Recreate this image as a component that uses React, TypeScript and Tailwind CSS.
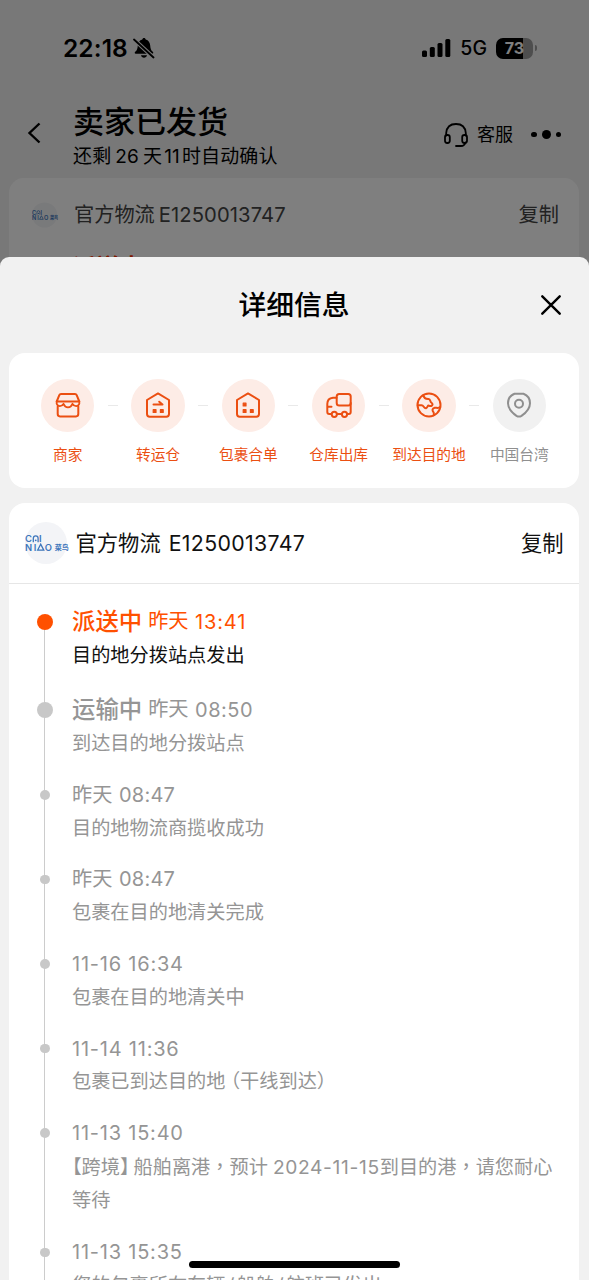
import type { ReactNode } from "react";

const FONT = "font-[Inter,'Noto_Sans_CJK_SC',sans-serif]";

function CainiaoLogo() {
  return (
    <span className="relative block h-[42px] w-[44px] shrink-0 text-[#3e76bb]">
      <span className="absolute top-0 left-0 size-[42px] rounded-full bg-[#f3f4f7]" />
      <svg viewBox="0 0 44 42" className="absolute inset-0 h-full w-full" fill="currentColor">
        <g fontSize="9.4" fontWeight="600">
          <text x="0" y="20.300">C</text>
          <text x="14" y="20.300">I</text>
          <text x="0" y="28.800">N</text>
          <text x="8.800" y="28.800">I</text>
          <text x="19.800" y="28.800">O</text>
        </g>
        <text x="29.800" y="28.200" fontSize="7" fontWeight="700">菜鸟</text>
        <g fill="none" stroke="currentColor" strokeWidth="1.300">
          <path d="M8.300 20.300v-3.800q0-2.700 2.400-2.700t2.400 2.700v3.800" />
          <path d="m12.600 28.200 3.100-6 3.100 6Z" />
        </g>
        <circle cx="10.700" cy="18.300" r="0.900" />
      </svg>
    </span>
  );
}

function StepIcon({ name }: { name: string }) {
  const house = "M14 2.400 25 9v14q0 2.700-2.700 2.700H5.700Q3 25.700 3 23V9Z";
  return (
    <svg viewBox="0 0 28 28" className="size-7" fill="none" stroke="currentColor" strokeWidth="2" strokeLinejoin="round" strokeLinecap="round">
      {name === "shop" && (
        <>
          <path d="M7 2.900h14q1.200 0 1.700 1.200L25.300 10.500H2.700L5.300 4.100Q5.800 2.900 7 2.900Z" />
          <path d="M2.700 10.500v2.300c.6 1.700 1.800 2.300 3.200 2.300 1.600 0 2.800-.8 3.600-2.300 1 2.500 2.500 3.500 4.500 3.500s3.500-1 4.500-3.500c.8 1.500 2 2.300 3.600 2.300 1.400 0 2.600-.6 3.200-2.300v-2.300" strokeWidth="1.800" />
          <path d="M3.700 15.500v7.600q0 2.300 2.300 2.300h16q2.300 0 2.300-2.300v-7.600" />
        </>
      )}
      {name === "transfer" && (
        <>
          <path d={house} />
          <path d="M9.500 13.500h9l-3.300-2.800" />
          <path d="M9.200 18.700h2.800v2.800H9.200zM16.400 18.700h2.800v2.800h-2.800z" fill="currentColor" strokeWidth="1.200" />
        </>
      )}
      {name === "merge" && (
        <>
          <path d={house} />
          <path d="M9.200 12.200h2.800V15H9.200zM9.200 18.700h2.800v2.800H9.200zM16.400 18.700h2.800v2.800h-2.800z" fill="currentColor" strokeWidth="1.200" />
        </>
      )}
      {name === "truck" && (
        <>
          <rect x="11.700" y="2.900" width="14" height="11.500" rx="2.500" />
          <path d="M11.500 6.700H8Q2.300 7.200 2.300 13v8q0 2 2 2h2M12.500 23h4M22.500 23h1.200q2 0 2-2v-9M2.500 15.700h4" />
          <circle cx="9.300" cy="23.300" r="2.600" />
          <circle cx="19.500" cy="23.300" r="2.600" />
        </>
      )}
      {name === "globe" && (
        <>
          <circle cx="14" cy="14" r="11.500" />
          <path d="M8.500 4.500c.500 3 2 3.500 5 3.400 2.500.200 1 3.200 3.200 4 2.200 1.800-.500 4-2.700 2.800-1.500-1-1 2-3 2.500-2.500.200-2-3-4.500-3H2.700M25.300 16c-2.500 1.800-4 .400-5.600.700-2.700.600-2.600 2.800-1.300 4.300 1 1 .200 2.500.200 3.300" />
        </>
      )}
      {name === "pin" && (
        <>
          <path d="M9.500 2.700h9q6.500 2.500 6.500 9.500 0 6.800-8.500 12.600-2.500 1.600-5 0Q3 19 3 12.200q0-7 6.500-9.500Z" />
          <circle cx="14" cy="12.700" r="4" />
        </>
      )}
    </svg>
  );
}

const steps = [
  { name: "shop", label: "商家" },
  { name: "transfer", label: "转运仓" },
  { name: "merge", label: "包裹合单" },
  { name: "truck", label: "仓库出库" },
  { name: "globe", label: "到达目的地" },
  { name: "pin", label: "中国台湾" },
];

function Comma() {
  return <span className="font-['Noto_Sans_CJK_TC',sans-serif]">，</span>;
}

function Half({ children, className = "" }: { children: ReactNode; className?: string }) {
  return <span className={`[font-feature-settings:'halt'] ${className}`}>{children}</span>;
}

type Event = { status?: string; day?: string; time: string; tracking?: string; text: ReactNode; active?: boolean };

const events: Event[] = [
  { status: "派送中", day: "昨天", time: "13:41", tracking: "tracking-[0.850px]", text: "目的地分拨站点发出", active: true },
  { status: "运输中", day: "昨天", time: "08:50", tracking: "tracking-[0.500px]", text: "到达目的地分拨站点" },
  { day: "昨天", time: "08:47", tracking: "tracking-[0.250px]", text: "目的地物流商揽收成功" },
  { day: "昨天", time: "08:47", tracking: "tracking-[0.250px]", text: "包裹在目的地清关完成" },
  { time: "11-16 16:34", text: "包裹在目的地清关中" },
  { time: "11-14 11:36", text: <>包裹已到达目的地<Half className="ml-[5px]">（</Half>干线到达<Half>）</Half></> },
  {
    time: "11-13 15:40",
    text: (
      <>
        <Half>【</Half>跨境<Half className="mr-[4px]">】</Half>船舶离港<Comma />预计
        <span className="ml-[5px] tracking-[0.650px]">2024-11-15</span>到目的港<Comma />请您耐心
        <br />
        等待
      </>
    ),
  },
  {
    time: "11-13 15:35",
    text: (
      <>
        您的包裹所在车辆<span className="mx-[2px]">/</span>船舶<span className="mx-[2px]">/</span>航班已发出
      </>
    ),
  },
];

function TimelineRow({ event, first }: { event: Event; first: boolean }) {
  const big = Boolean(event.status);
  return (
    <li className={`flex ${event.active ? "text-[#111]" : "text-[#959595]"}`}>
      <div className="relative w-[63px] shrink-0">
        <span className={`absolute bottom-0 left-[35px] w-px bg-[#ccc] ${first ? "top-[18px]" : "top-0"}`} />
        <span
          className={`absolute rounded-full ${
            big ? "top-[10px] left-[28px] size-[15.500px]" : "top-[12px] left-[31px] size-[9.500px]"
          } ${event.active ? "bg-[#ff5000]" : "bg-[#c8c8c8]"}`}
        />
      </div>
      <div className={`whitespace-nowrap ${first ? "pb-[19.500px]" : "pb-[17.600px]"}`}>
        <div className={`flex items-center text-[20px] ${big ? "h-[35px]" : "h-[33.500px]"} ${event.active ? "text-[#ff5000]" : ""}`}>
          {big && <b className="mr-[6px] text-[23.400px] font-medium">{event.status}</b>}
          {event.day && <span className="mr-[6.500px] text-[20.200px]">{event.day}</span>}
          <span className={event.tracking ?? "tracking-[0.780px]"}>{event.time}</span>
        </div>
        <div className="text-[19.200px] leading-[33.500px]">{event.text}</div>
      </div>
    </li>
  );
}

function StatusBar() {
  return (
    <div className="flex h-[96px] items-center justify-between pr-[52.500px] pl-[63px]">
      <div className="flex items-center gap-[5px]">
        <span className="text-[24.500px] font-semibold tracking-[0.100px]">22:18</span>
        <svg viewBox="0 0 22 22" className="size-[22px]" fill="currentColor">
          <path d="M11 1c-.9 0-1.600.7-1.700 1.500C6.500 3.300 5 5.500 4.800 8.500c-.200 3.200-.800 4.800-2.600 6.300-.900.800-.600 2 .600 2h16.400c1.200 0 1.500-1.200.600-2-1.800-1.500-2.400-3.100-2.600-6.300-.200-3-1.700-5.200-4.500-6C12.600 1.700 11.900 1 11 1ZM8 18.300h6c-.300 3.300-5.700 3.300-6 0Z" />
          <path d="M1 2.500 20.500 20.500" stroke="#f1f1f1" strokeWidth="4" />
          <path d="M1 2.500 20.500 20.500" stroke="currentColor" strokeWidth="1.800" strokeLinecap="round" />
        </svg>
      </div>
      <div className="flex items-center">
        <svg viewBox="0 0 30 20" className="h-[20px] w-[30px]" fill="currentColor">
          <rect x="1" y="12.500" width="5" height="6.500" rx="1.500" />
          <rect x="8.800" y="9" width="5" height="10" rx="1.500" />
          <rect x="16.500" y="5" width="5" height="14" rx="1.500" />
          <rect x="24.300" y="1" width="5" height="18" rx="1.500" />
        </svg>
        <span className="ml-[9px] pt-[2px] text-[19.500px] font-medium">5G</span>
        <span className="ml-[9px] flex h-[21px] w-[37px] items-center justify-center rounded-[7px] bg-[linear-gradient(to_right,#000_74%,#9c9c9c_74%)] text-[16px] font-bold text-white">
          73
        </span>
        <span className="ml-[1.500px] h-[6px] w-[2px] rounded-r-full bg-[#9c9c9c]" />
      </div>
    </div>
  );
}

function OrderPage() {
  return (
    <div className="h-full bg-[#f1f1f1] text-black">
      <StatusBar />
      <header className="flex h-[82px] items-center px-[27px]">
        <svg viewBox="0 0 14 22" className="mt-[-8px] h-[22px] w-[14px]" fill="none" stroke="currentColor" strokeWidth="2.400">
          <path d="M12.500 1.500 2.500 11l10 9.500" />
        </svg>
        <div className="ml-[32px] flex-1">
          <h1 className="mt-[-2px] text-[31px] leading-[42px] font-medium">卖家已发货</h1>
          <p className="text-[19px] leading-[28px] tracking-[0.150px]">
            还剩<span className="mx-[4px]">26</span>天<span className="mx-[2px]">11</span>时自动确认
          </p>
        </div>
        <div className="mt-[-5px] flex items-center">
          <svg viewBox="0 0 26 26" className="size-[26px]" fill="none" stroke="currentColor" strokeWidth="1.800" strokeLinecap="round">
            <path d="M3.200 13.500V11Q4 2 13 2t9.800 9v2.500" />
            <rect x="2" y="13" width="4.800" height="8" rx="2.200" />
            <rect x="19.200" y="13" width="4.800" height="8" rx="2.200" />
            <path d="M22.500 20.500Q21.500 24 18 24h-5" />
          </svg>
          <span className="ml-[8px] text-[18px]">客服</span>
          <span className="mr-px ml-[18px] flex items-center gap-[5px]">
            <i className="size-[5.500px] rounded-full bg-black" />
            <i className="size-[9px] rounded-full bg-black" />
            <i className="size-[5.500px] rounded-full bg-black" />
          </span>
        </div>
      </header>
      <section className="mr-[10px] ml-[9px] h-[200px] rounded-[15px] bg-white pt-[16px]">
        <div className="flex h-[42px] items-center pr-[20px] pl-[23px] text-[20.200px] text-[#444]">
          <span className="mr-[14px] w-[28px]">
            <span className="block origin-left scale-[0.6]"><CainiaoLogo /></span>
          </span>
          官方物流<span className="ml-[4px] tracking-[0.100px]">E1250013747</span>
          <span className="ml-auto">复制</span>
        </div>
        <div className="mt-[14px] flex items-center justify-between pr-[42px] pl-[64px] leading-[35px]">
          <b className="text-[23.400px] font-bold text-[#ff3000]">派送中</b>
          <span className="text-[18.500px] text-[#999]">详细信息</span>
        </div>
      </section>
    </div>
  );
}

export default function App() {
  return (
    <main className={`relative h-[1280px] w-full overflow-hidden ${FONT}`}>
      <OrderPage />
      <div className="absolute inset-0 bg-black/50" />
      <section className="absolute inset-x-0 top-[257px] bottom-0 overflow-hidden rounded-t-[9px] bg-[#f1f1f1] pr-[10px] pl-[9px] text-[#111]">
        <div className="grid h-[96px] grid-cols-[56px_1fr_56px] items-center">
          <h2 className="col-start-2 pt-[2px] text-center text-[27.800px] font-medium text-black">详细信息</h2>
          <svg viewBox="0 0 20 20" className="size-[20px] justify-self-center" stroke="#000" strokeWidth="2.400" strokeLinecap="round">
            <path d="m1.300 1.300 17.400 17.400M18.700 1.300 1.300 18.700" />
          </svg>
        </div>
        <ol className="flex h-[135px] rounded-[16px] bg-white pt-[25.500px] pr-[14.500px] pl-[13.500px]">
          {steps.map((step, i) => {
            const last = i === steps.length - 1;
            return (
              <li key={step.name} className={`flex-1 ${last ? "text-[#8f8f8f]" : "text-[#eb4f12]"}`}>
                <div className="flex items-center justify-between">
                  <span className={`h-px w-[5px] ${i ? "bg-[#e9e9e9]" : ""}`} />
                  <span className={`flex size-[53.500px] items-center justify-center rounded-full ${last ? "bg-[#f1f1f1]" : "bg-[#fdece6]"}`}>
                    <StepIcon name={step.name} />
                  </span>
                  <span className={`h-px w-[5px] ${last ? "" : "bg-[#e9e9e9]"}`} />
                </div>
                <p className="mt-[12px] text-center text-[14.700px] leading-[22px] whitespace-nowrap">{step.label}</p>
              </li>
            );
          })}
        </ol>
        <div className="mt-[14.500px] rounded-t-[16px] bg-white">
          <div className="flex h-[81px] items-center border-b border-[#e6e6e6] px-[15.500px] pt-px text-[21.300px]">
            <CainiaoLogo />
            <span className="ml-[7px] pt-px">官方物流</span>
            <span className="ml-[8px] pt-px tracking-[0.350px]">E1250013747</span>
            <span className="ml-auto pt-px">复制</span>
          </div>
          <ul className="pt-[20.500px]">
            {events.map((event, i) => (
              <TimelineRow key={i} event={event} first={i === 0} />
            ))}
          </ul>
        </div>
      </section>
      <div className="absolute bottom-[12px] left-[189px] h-[7px] w-[211px] rounded-full bg-black" />
    </main>
  );
}
